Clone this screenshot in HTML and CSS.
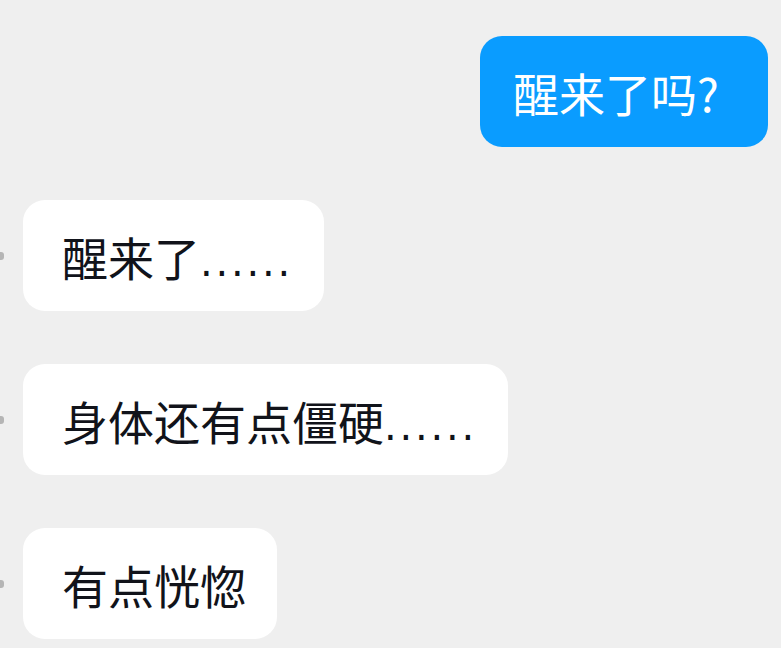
FILE: index.html
```html
<!DOCTYPE html>
<html lang="zh-CN">
<head>
  <meta charset="UTF-8" />
  <meta name="viewport" content="width=device-width, initial-scale=1.0" />
  <title>聊天</title>
  <link rel="stylesheet" href="styles.css">
</head>
<body>
  <div class="chat">
    <div class="row mine">
      <div class="bubble blue">醒来了吗?</div>
    </div>
    <div class="row theirs">
      <span class="avatar"></span>
      <div class="bubble">醒来了<span class="dots">......</span></div>
    </div>
    <div class="row theirs">
      <span class="avatar"></span>
      <div class="bubble">身体还有点僵硬<span class="dots">......</span></div>
    </div>
    <div class="row theirs">
      <span class="avatar"></span>
      <div class="bubble">有点恍惚</div>
    </div>
  </div>
</body>
</html>
```

FILE: styles.css
```css
body { margin: 0; background: #efefef; font-family: "Noto Sans CJK SC", "Noto Sans", sans-serif; overflow: hidden; }
.chat { display: flex; flex-direction: column; gap: 53px; padding: 36px 13px 0 0; }
.row { display: flex; align-items: center; }
.row.mine { justify-content: flex-end; }
.avatar { width: 4px; height: 8px; background: #b5b5b5; border-radius: 0 3px 3px 0; margin-right: 19px; }
.bubble { height: 111px; line-height: 113px; padding: 0 31px 0 39px; background: #fff; color: #11131a; font-size: 46px; border-radius: 22px; box-sizing: border-box; white-space: nowrap; }
.bubble.blue { background: #0a9cff; color: #fff; width: 288px; padding-left: 33px; }
.dots { font-family: "DejaVu Sans", sans-serif; font-size: 40px; letter-spacing: 2.8px; }
```
